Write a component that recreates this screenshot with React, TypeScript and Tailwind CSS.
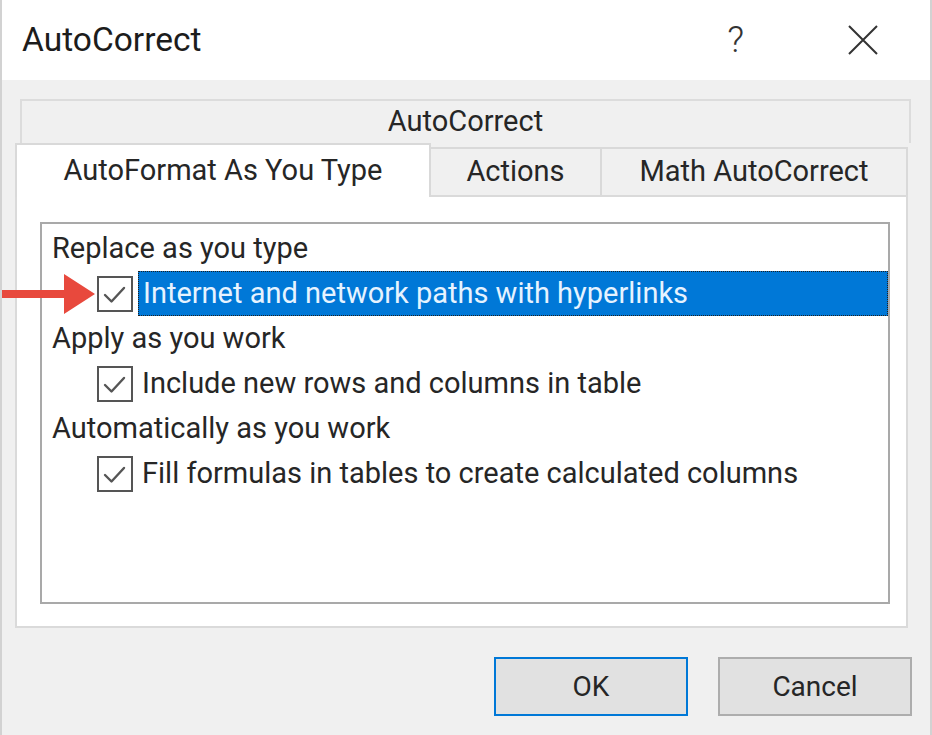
import React from 'react';

const font = { fontFamily: 'Roboto, "Noto Sans", sans-serif' };

const Check = () => (
  <div className="w-[36px] h-[36px] border-2 border-[#555] bg-white flex items-center justify-center shrink-0">
    <svg width="32" height="32" viewBox="0 0 32 32" fill="none">
      <path d="M6 17 L12.5 23.5 L25 10" stroke="#555" strokeWidth="2.4" strokeLinecap="round" strokeLinejoin="round" />
    </svg>
  </div>
);

const Header: React.FC<{ label: string }> = ({ label }) => (
  <div className="h-[45px] flex items-center pl-[10px] text-[29px] text-[#262626]">{label}</div>
);

const Item: React.FC<{ label: string; selected?: boolean }> = ({ label, selected }) => (
  <div className="h-[45px] flex items-center pl-[55px]">
    <Check />
    <div
      className={`ml-[5px] h-[45px] flex items-center px-[4px] text-[29px] ${
        selected
          ? 'flex-1 bg-[#0078d7] text-[#e6f3ff] border border-dotted border-[#202020]'
          : 'text-[#262626]'
      }`}
    >
      {label}
    </div>
  </div>
);

export default function App() {
  return (
    <div className="relative w-[932px] h-[735px] bg-[#f0f0f0] border-l-2 border-r-2 border-[#d2d2d2] overflow-hidden" style={font}>
      {/* title bar */}
      <div className="h-[80px] bg-white flex items-center pl-[20px] pr-[52px]">
        <div className="text-[33.5px] text-[#1c1c1c] flex-1">AutoCorrect</div>
        <div className="text-[37px] text-[#333] font-light mr-[104px]">?</div>
        <svg width="30" height="30" viewBox="0 0 30 30">
          <path d="M1 1 L29 29 M29 1 L1 29" stroke="#333" strokeWidth="2" />
        </svg>
      </div>

      {/* tabs */}
      <div className="pt-[19px] pl-[13px]">
        <div className="ml-[5px] w-[891px] h-[44px] border-t-2 border-l-2 border-r-2 border-[#dcdcdc] flex items-center justify-center text-[29px] text-[#262626]">
          AutoCorrect
        </div>
        <div className="flex items-end h-[52px]">
          <div className="relative z-10 w-[416px] h-[54px] -mb-[2px] bg-white border-t-2 border-l-2 border-r-2 border-[#d9d9d9] flex items-start pt-[4px] justify-center text-[29px] text-[#262626]">
            AutoFormat As You Type
          </div>
          <div className="w-[171px] h-[48px] border-t-2 border-r-2 border-[#d9d9d9] bg-[#f0f0f0] flex items-center justify-center text-[29px] text-[#262626]">
            Actions
          </div>
          <div className="w-[306px] h-[48px] border-t-2 border-r-2 border-[#d9d9d9] bg-[#f0f0f0] flex items-center justify-center text-[29px] text-[#262626]">
            Math AutoCorrect
          </div>
        </div>

        {/* panel */}
        <div className="w-[893px] h-[433px] bg-white border-2 border-[#dadada] pt-[25px] pl-[23px] pr-[16px] pb-[22px]">
          <div className="h-full border-2 border-[#a9a9a9] bg-white pt-[2px]">
            <Header label="Replace as you type" />
            <Item label="Internet and network paths with hyperlinks" selected />
            <Header label="Apply as you work" />
            <Item label="Include new rows and columns in table" />
            <Header label="Automatically as you work" />
            <Item label="Fill formulas in tables to create calculated columns" />
          </div>
        </div>
      </div>

      {/* buttons */}
      <div className="flex justify-end gap-[30px] pr-[18px] pt-[29px]">
        <button className="w-[194px] h-[59px] bg-[#e1e1e1] border-2 border-[#0078d7] text-[28px] text-[#262626]">OK</button>
        <button className="w-[194px] h-[59px] bg-[#e1e1e1] border-2 border-[#adadad] text-[28px] text-[#262626]">Cancel</button>
      </div>

      {/* red annotation arrow */}
      <svg className="absolute left-0 top-[272px]" width="96" height="44" viewBox="0 0 96 44">
        <path d="M0 18 L62 18 L62 2 L93 22 L62 42 L62 26 L0 26 Z" fill="#e8493d" />
      </svg>
    </div>
  );
}
